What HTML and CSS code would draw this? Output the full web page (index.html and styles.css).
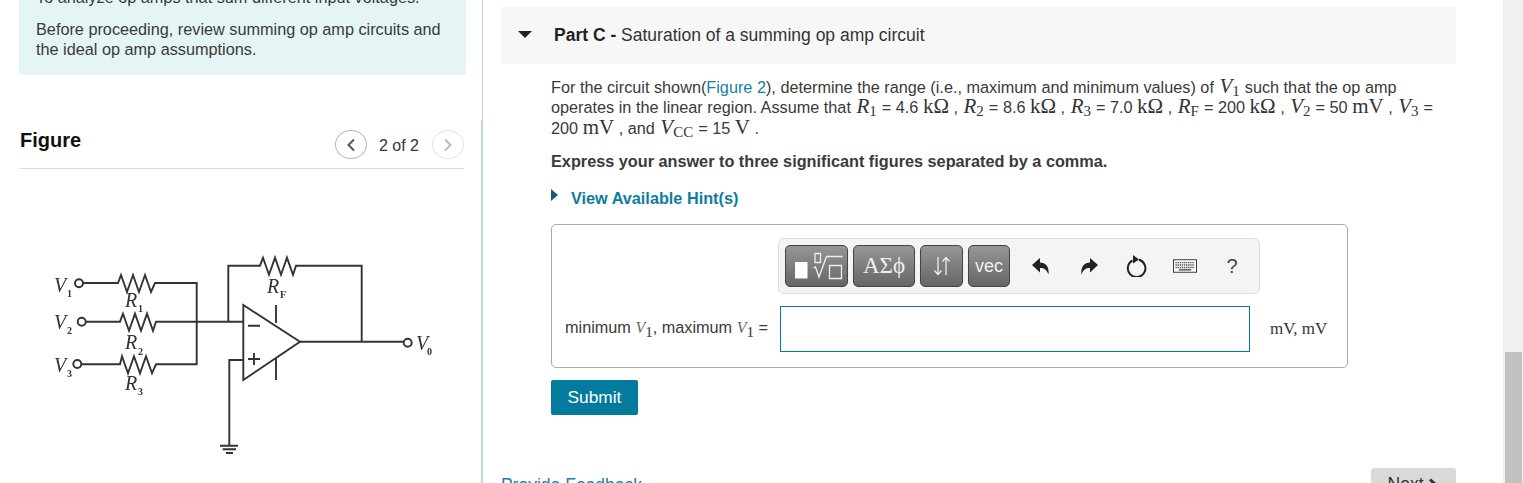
FILE: index.html
```html
<!DOCTYPE html>
<html lang="en">
<head>
<meta charset="utf-8">
<title>Part C - Saturation of a summing op amp circuit</title>
<link rel="stylesheet" href="styles.css">
</head>
<body>
<div class="page">
  <aside class="left">
    <section class="intro">
      <p>To analyze op amps that sum different input voltages.</p>
      <p>Before proceeding, review summing op amp circuits and<br>the ideal op amp assumptions.</p>
    </section>
    <section class="figure">
      <div class="figure-head">
        <h2>Figure</h2>
        <div class="pager">
          <span class="round"><svg width="10" height="14" viewBox="0 0 10 14"><path d="M8 1.500 2.500 7 8 12.500" class="chev"/></svg></span>
          <span class="count">2 of 2</span>
          <span class="round off"><svg width="10" height="14" viewBox="0 0 10 14"><path d="M2 1.500 7.500 7 2 12.500" class="chev"/></svg></span>
        </div>
      </div>
      <svg class="circuit" width="440" height="314" viewBox="0 169 440 314">
        <g class="wire">
          <path d="M83 283H118l3-8 6 17 6-17 6 17 6-17 6 17 4-9H196.700V364.300H156l-4 9-6-17-6 17-6-17-6 17-6-17-2 8H81"/>
          <path d="M85.500 321.700H120l3-8 6 17 6-17 6 17 6-17 6 17 3-9H243"/>
          <path d="M228.300 321.700V265.700H260l3-8 6 17 6-17 6 17 6-17 6 17 3-9H361.700V341.700"/>
          <path d="M243.300 305V380L300 341.700Z"/>
          <path d="M300 341.700H403.500"/>
          <path d="M276 305V323M276 358V380"/>
          <path d="M248 325.700H260M248 359H260M254 353V365"/>
          <path d="M243 360H229.300V445"/>
          <path d="M220 445.700H238M222.700 449.300H236M226 453H233"/>
          <circle cx="79" cy="283.300" r="4"/>
          <circle cx="81.700" cy="321.700" r="4"/>
          <circle cx="77.300" cy="364" r="4"/>
          <circle cx="407.700" cy="342.700" r="4"/>
        </g>
        <g class="lab">
          <text x="54" y="292">V</text><text x="67" y="297" class="s">1</text>
          <text x="54" y="329">V</text><text x="67" y="334" class="s">2</text>
          <text x="54" y="372">V</text><text x="67" y="377" class="s">3</text>
          <text x="125" y="307">R</text><text x="138" y="312" class="s">1</text>
          <text x="125" y="349">R</text><text x="138" y="355" class="s">2</text>
          <text x="125" y="390">R</text><text x="138" y="395" class="s">3</text>
          <text x="267" y="293">R</text><text x="280" y="298" class="s">F</text>
          <text x="416" y="350">V</text><text x="427" y="355" class="s">0</text>
        </g>
      </svg>
    </section>
  </aside>

  <main class="right">
    <header class="part-head">
      <span class="caret"></span>
      <h1><b>Part C -</b> Saturation of a summing op amp circuit</h1>
    </header>
    <div class="part-body">
      <p class="prompt">For the circuit shown(<a>Figure 2</a>), determine the range (i.e., maximum and minimum values) of <span class="m"><i>V</i><sub>1</sub></span> such that the op amp<br>operates in the linear region. Assume that <span class="m"><i>R</i><sub>1</sub></span> = 4.6 <span class="m">kΩ</span> , <span class="m"><i>R</i><sub>2</sub></span> = 8.6 <span class="m">kΩ</span> , <span class="m"><i>R</i><sub>3</sub></span> = 7.0 <span class="m">kΩ</span> , <span class="m"><i>R</i><sub>F</sub></span> = 200 <span class="m">kΩ</span> , <span class="m"><i>V</i><sub>2</sub></span> = 50 <span class="m">mV</span> , <span class="m"><i>V</i><sub>3</sub></span> =<br>200 <span class="m">mV</span> , and <span class="m"><i>V</i><sub>CC</sub></span> = 15 <span class="m">V</span> .</p>
      <p class="express">Express your answer to three significant figures separated by a comma.</p>
      <p class="hint"><span class="hint-caret"></span>View Available Hint(s)</p>

      <div class="answer">
        <div class="toolbar">
          <span class="btn b1"><svg width="61" height="40" viewBox="0 0 61 40"><rect x="9" y="16" width="12.500" height="16.500" fill="#fff"/><path d="M29 7.500h5.500v9H29z M43.500 19.500h12v13h-12z" class="ln"/><path d="M27.500 22l2-1 3.500 10 7.500-20.500h16" class="ln"/></svg></span>
          <span class="btn b2">ΑΣϕ</span>
          <span class="btn b3"><svg width="20" height="22" viewBox="0 0 20 22"><path d="M6 2V19M2.500 15.500 6 19.500 9.500 15.500M14 20V3M10.500 6.500 14 2.500 17.500 6.500" class="ln"/></svg></span>
          <span class="btn b4">vec</span>
          <span class="tool t1"><svg width="18" height="18" viewBox="0 0 18 18"><path d="M0 8 8 1V5.500C13.500 5.500 17.500 9.500 16.500 17.500 14.500 12.500 12.500 11 8 11V15.500Z" fill="#222"/></svg></span>
          <span class="tool t2"><svg width="18" height="18" viewBox="0 0 18 18"><path d="M18 8 10 1V5.500C4.500 5.500 .5 9.500 1.500 17.500 3.500 12.500 5.500 11 10 11V15.500Z" fill="#222"/></svg></span>
          <span class="tool t3"><svg width="22" height="22" viewBox="0 0 22 22"><path d="M7.500 5.500A8.800 8.800 0 1 0 14 4.800" fill="none" stroke="#222" stroke-width="2"/><path d="M8 0 14 4.500 8 8.500Z" fill="#222"/></svg></span>
          <span class="tool t4"><svg width="25" height="14" viewBox="0 0 25 14"><rect x=".5" y=".5" width="24" height="13" fill="#fff" stroke="#333"/><path d="M2.500 3.500H22.500M2.500 6H22.500M2.500 8.500H22.500" stroke="#555" stroke-width="1.500" stroke-dasharray="1.500 .7"/><path d="M6 11H19" stroke="#555" stroke-width="1.500"/></svg></span>
          <span class="tool t5">?</span>
        </div>
        <div class="answer-row">
          <span class="ans-label">minimum <span class="v"><i>V</i><sub>1</sub></span>, maximum <span class="v"><i>V</i><sub>1</sub></span> =</span>
          <span class="input"></span>
          <span class="units">mV, mV</span>
        </div>
      </div>

      <span class="submit">Submit</span>
      <footer class="foot">
        <a class="feedback">Provide Feedback</a>
        <span class="next">Next <svg width="11" height="14" viewBox="0 0 11 14"><path d="M2 1.500 8 7 2 12.500" fill="none" stroke="#333" stroke-width="3"/></svg></span>
      </footer>
    </div>
  </main>

  <div class="scrollbar"><div class="thumb"></div></div>
</div>
</body>
</html>
```
FILE: styles.css
```css
* { box-sizing: border-box; }
html, body { margin: 0; height: 483px; overflow: hidden; background: #fff; }
body { font-family: "Liberation Sans", Arial, sans-serif; font-size: 16.250px; line-height: 20px; color: #3a3a3a; }
p, h1, h2 { margin: 0; }

.page { display: flex; width: 1523px; height: 483px; overflow: hidden; }

.left { width: 483px; flex: none; border-right: 1px solid #c5d5e3; height: 483px; overflow: hidden; }
.intro { margin: -13px 0 0 19px; width: 447px; height: 88px; padding: 0 17px; background: #e5f5f6; }
.intro p + p { margin-top: 12px; }
.figure { margin-top: 45px; height: 400px; border-right: 1px solid #bccfdf; }
.figure-head { margin: 0 17px 0 19px; height: 49px; border-bottom: 1px solid #ddd; display: flex; justify-content: space-between; align-items: flex-start; padding: 9px 0 0 1px; }
.figure-head h2 { font-size: 20px; line-height: 22px; color: #111; }
.pager { display: flex; align-items: center; font-size: 16px; margin-top: 1px; }
.round { width: 32px; height: 29px; border: 1px solid #b9b9b9; border-radius: 50%; display: flex; align-items: center; justify-content: center; }
.round.off { border-color: #e3e3e3; }
.round.off .chev { stroke: #bbb; }
.chev { fill: none; stroke: #555; stroke-width: 2; }
.count { margin: 2px 13px 0 12px; color: #333; }
.circuit { display: block; filter: blur(.4px); }
.wire path, .wire circle { fill: none; stroke: #333; stroke-width: 1.900; }
.lab text { font-family: "Liberation Serif", serif; font-style: italic; font-size: 20px; fill: #333; }
.lab text.s { font-size: 10px; font-style: normal; font-weight: bold; }

.right { width: 955px; margin-left: 18px; flex: none; height: 483px; }
.part-head { margin-top: 7px; height: 57px; background: #f7f7f7; display: flex; align-items: center; padding: 0 0 2px 17px; }
.caret { width: 0; height: 0; border-left: 7px solid transparent; border-right: 7px solid transparent; border-top: 7px solid #222; margin-right: 22px; }
.part-head h1 { font-size: 17.500px; font-weight: normal; color: #333; }
.part-head b { color: #222; }

.part-body { padding-left: 50px; }
.prompt { margin-top: 13px; width: 900px; line-height: 20.300px; white-space: nowrap; }
.prompt a { color: #1a7fa0; }
.m { font-family: "Liberation Serif", serif; font-size: 21px; line-height: 0; color: #333; }
.m i { margin-left: 1px; }
.m sub { font-size: 15px; line-height: 0; vertical-align: -3px; margin-right: .5px; }
.express { margin-top: 13px; font-weight: bold; }
.hint { margin-top: 17px; font-weight: bold; color: #0f7c9f; display: flex; align-items: center; }
.hint-caret { width: 0; height: 0; border-top: 6px solid transparent; border-bottom: 6px solid transparent; border-left: 7px solid #0d5f7c; margin: -5px 13px 0 0; }

.answer { margin-top: 16px; width: 797px; height: 144px; border: 1px solid #aaa; border-radius: 5px; padding-top: 13px; }
.toolbar { margin-left: 226px; width: 482px; height: 56px; border: 1px solid #ddd; border-radius: 6px; background: #f4f4f4; display: flex; align-items: center; padding-left: 6px; }
.btn { height: 42px; border: 1px solid #444; border-radius: 5px; background: linear-gradient(#969696, #666); color: #f0f0f0; display: flex; align-items: center; justify-content: center; margin-right: 5px; }
.b1 { width: 63px; }
.b2 { width: 62px; font-family: "Liberation Serif", serif; font-size: 23px; }
.b3 { width: 43px; }
.b4 { width: 42px; font-size: 18px; }
.ln { fill: none; stroke: #eee; stroke-width: 1.300; }
.tool { display: flex; align-items: center; justify-content: center; width: 24px; height: 24px; }
.t1 { margin-left: 14px; }
.t2 { margin-left: 24px; }
.t3 { margin-left: 23px; }
.t4 { margin-left: 25px; }
.t5 { margin-left: 23px; font-size: 20px; color: #444; }

.answer-row { display: flex; align-items: center; margin-top: 12px; padding-left: 13px; height: 46px; position: relative; }
.ans-label { width: 215px; flex: none; white-space: nowrap; margin-top: -4px; }
.v { font-family: "Liberation Serif", serif; font-size: 16px; color: #666; line-height: 0; }
.v sub { font-size: 15px; line-height: 0; color: #333; }
.input { width: 470px; height: 46px; border: 1px solid #047a9c; flex: none; }
.units { margin-left: 20px; font-family: "Liberation Serif", serif; font-size: 17px; color: #333; }

.submit { display: block; margin-top: 12px; width: 87px; height: 35px; background: #047a9c; color: #fff; border-radius: 2px; text-align: center; line-height: 34px; font-size: 17.300px; }
.foot { position: relative; margin: 53px 0 0 -50px; display: flex; justify-content: space-between; height: 30px; }
.feedback { color: #1a7fa0; margin-top: 7px; font-size: 17.500px; }
.next { width: 85px; height: 30px; background: #d9d9d9; border-radius: 3px 3px 0 0; text-align: center; color: #333; padding-top: 6px; font-size: 17.500px; }
.next svg { vertical-align: -2px; }

.scrollbar { position: absolute; left: 1503px; top: 0; width: 20px; height: 483px; background: #f1f1f1; }
.thumb { position: absolute; left: 2px; right: 1px; top: 352px; bottom: 0; background: #c1c1c1; }
```
